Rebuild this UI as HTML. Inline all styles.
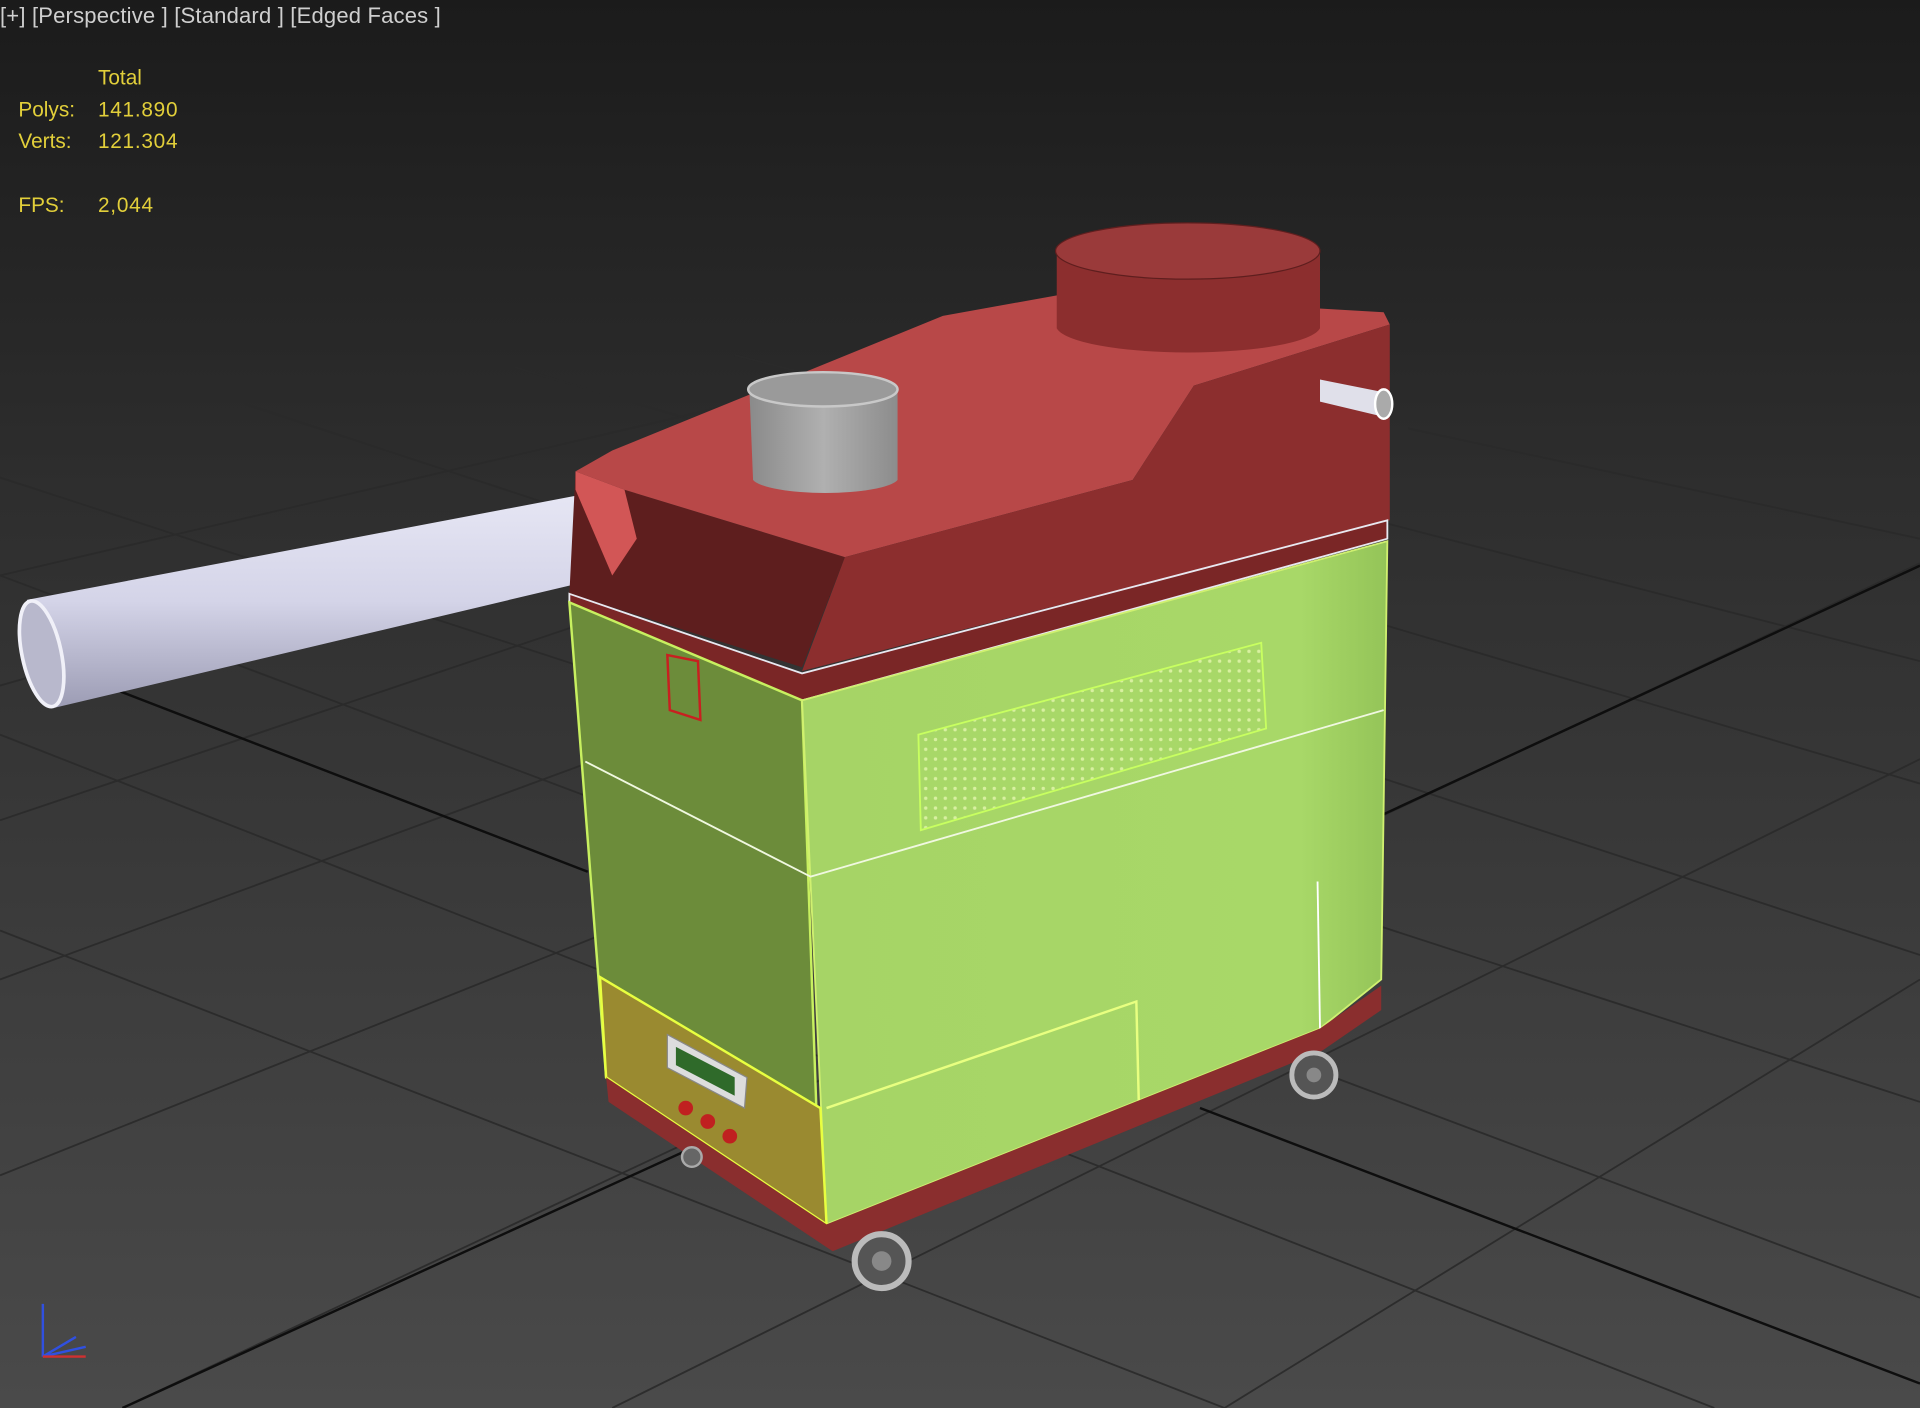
<!DOCTYPE html>
<html><head><style>
html,body{margin:0;padding:0;width:1920px;height:1408px;overflow:hidden;background:#333}
svg{display:block}
</style></head><body>
<svg width="1920" height="1408" viewBox="0 0 1568 1150" preserveAspectRatio="none" xmlns="http://www.w3.org/2000/svg">
<defs>
<linearGradient id="bg" x1="0" y1="0" x2="0" y2="1">
<stop offset="0" stop-color="#1b1b1b"/><stop offset="0.35" stop-color="#2e2e2e"/><stop offset="1" stop-color="#4a4a4a"/>
</linearGradient>
<linearGradient id="pipe" x1="0" y1="0" x2="0" y2="1">
<stop offset="0" stop-color="#e6e6f4"/><stop offset="0.5" stop-color="#d4d4e8"/><stop offset="1" stop-color="#9c9cb4"/>
</linearGradient>
<linearGradient id="gray" x1="0" y1="0" x2="1" y2="0">
<stop offset="0" stop-color="#8a8a8a"/><stop offset="0.5" stop-color="#b0b0b0"/><stop offset="1" stop-color="#8c8c8c"/>
</linearGradient>
<linearGradient id="green" x1="0" y1="0" x2="1" y2="0">
<stop offset="0" stop-color="#a6d466"/><stop offset="0.85" stop-color="#a8d868"/><stop offset="1" stop-color="#94c458"/>
</linearGradient>
<pattern id="dots" width="8" height="8" patternUnits="userSpaceOnUse">
<rect width="8" height="8" fill="#a8d868"/><circle cx="4" cy="4" r="1.4" fill="#d8f0a0"/>
</pattern>
</defs>
<rect width="1568" height="1150" fill="url(#bg)"/>
<g stroke="#2a2a2a" stroke-width="1.5" fill="none" opacity="0.9">
<path d="M0 470 L600 330 M0 560 L700 360 M0 670 L800 400 M0 800 L950 450 M0 960 L1100 520 M100 1150 L1568 460 M500 1150 L1568 620 M1000 1150 L1568 800"/>
<path d="M0 390 L1568 900 M0 470 L1568 1060 M200 330 L1568 780 M420 300 L1568 640 M600 290 L1568 540 M0 600 L1400 1150 M0 760 L1000 1150 M1150 350 L1568 440"/>
</g>
<path d="M60 550 L480 712 M1130 665 L1568 462 M100 1150 L560 940 M980 905 L1568 1130" stroke="#0e0e0e" stroke-width="2" fill="none"/>
<path d="M22 490 L475 404 L500 470 L45 578 Z" fill="url(#pipe)"/>
<ellipse cx="34" cy="534" rx="16" ry="44" transform="rotate(-12 34 534)" fill="#b8b8cc" stroke="#f0f0f8" stroke-width="3"/>
<path d="M465 485 L470 385 L510 400 L690 455 L655 545 Z" fill="#5e1e1e"/>
<path d="M470 385 L500 368 L770 258 L870 240 L1130 255 L1135 265 L975 315 L925 392 L690 455 L510 400 Z" fill="#b84848"/>
<path d="M690 455 L925 392 L975 315 L1135 265 L1135 425 L655 548 Z" fill="#8c2e2e"/>
<path d="M470 385 L510 400 L520 440 L500 470 L470 400 Z" fill="#d25656"/>
<path d="M465 485 L655 550 L1133 425 L1133 440 L655 572 L465 495 Z" fill="#7a2626" stroke="#e8e8f0" stroke-width="1.5"/>
<path d="M863 205 L863 268 A108 22 0 0 0 1078 268 L1078 205 Z" fill="#8c2e2e"/>
<ellipse cx="970" cy="205" rx="108" ry="23" fill="#9a3a3a" stroke="#5e1e1e"/>
<path d="M612 318 L615 392 A60 13 0 0 0 733 392 L733 318 Z" fill="url(#gray)"/>
<ellipse cx="672" cy="318" rx="61" ry="14" fill="#9a9a9a" stroke="#c8c8c8" stroke-width="2"/>
<path d="M1078 310 L1128 320 L1128 340 L1078 328 Z" fill="#e0e0ea"/>
<ellipse cx="1130" cy="330" rx="7" ry="12" fill="#aaa" stroke="#fff" stroke-width="2"/>
<path d="M465 492 L655 572 L670 1000 L495 880 Z" fill="#6c8c3a" stroke="#c8f060" stroke-width="2"/>
<path d="M655 572 L1133 442 L1128 800 L1078 840 L675 1000 Z" fill="url(#green)" stroke="#d0f070" stroke-width="1.5"/>
<path d="M478 622 L662 716 L1130 580" stroke="#f0f8e0" stroke-width="1.5" fill="none"/>
<path d="M1076 720 L1078 840" stroke="#fff" stroke-width="1.5"/>
<path d="M675 905 L928 818 L930 900" stroke="#e8ff80" stroke-width="2" fill="none"/>
<path d="M490 798 L670 905 L675 1000 L495 880 Z" fill="#9a8a30" stroke="#e8ff40" stroke-width="2"/>
<path d="M545 845 L610 880 L608 905 L545 872 Z" fill="#ddd" stroke="#888"/>
<path d="M552 855 L600 880 L600 895 L552 870 Z" fill="#2f6a2a"/>
<circle cx="560" cy="905" r="6" fill="#c02020"/><circle cx="578" cy="916" r="6" fill="#c02020"/><circle cx="596" cy="928" r="6" fill="#c02020"/>
<path d="M750 600 L1030 525 L1034 595 L752 678 Z" fill="url(#dots)" stroke="#c8ff60" stroke-width="1.5"/>
<path d="M545 535 L570 540 L572 588 L547 580 Z" fill="none" stroke="#c82020" stroke-width="2"/>
<path d="M495 880 L675 1000 L1078 840 L1128 805 L1128 825 L1080 858 L680 1022 L497 900 Z" fill="#8a2e2e"/>
<circle cx="720" cy="1030" r="22" fill="#555" stroke="#bbb" stroke-width="5"/>
<circle cx="720" cy="1030" r="8" fill="#888"/>
<circle cx="1073" cy="878" r="18" fill="#555" stroke="#bbb" stroke-width="4"/>
<circle cx="1073" cy="878" r="6" fill="#888"/>
<circle cx="565" cy="945" r="8" fill="#666" stroke="#aaa" stroke-width="2"/>
<path d="M35 1108 L35 1065 M35 1108 L70 1100 M35 1108 L62 1092" stroke="#3050e0" stroke-width="2"/>
<path d="M35 1108 L70 1108" stroke="#d03030" stroke-width="2"/>
<g font-family="Liberation Sans, sans-serif" font-size="17">
<text x="0" y="19" fill="#cfcfcf" font-size="18" textLength="360">[+] [Perspective ] [Standard ] [Edged Faces ]</text>
<g fill="#e2cf3a">
<text x="80" y="69">Total</text>
<text x="15" y="95">Polys:</text><text x="80" y="95" textLength="65">141.890</text>
<text x="15" y="121">Verts:</text><text x="80" y="121" textLength="65">121.304</text>
<text x="15" y="173">FPS:</text><text x="80" y="173" textLength="45">2,044</text>
</g>
</g>
</svg>
</body></html>
